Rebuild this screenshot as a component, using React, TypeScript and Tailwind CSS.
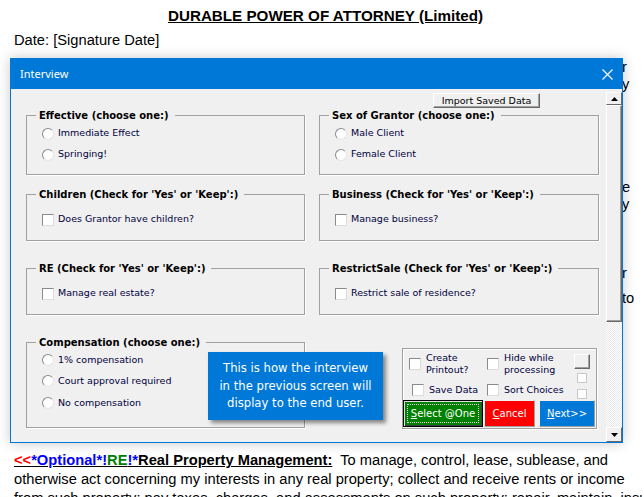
import type { ReactNode } from 'react';

const Radio = () => (
  <span className="w-[12px] h-[12px] shrink-0 rounded-full bg-white border border-t-[#8a8a8a] border-l-[#8a8a8a] border-r-[#e4e4e4] border-b-[#e4e4e4]" />
);

const Check = () => (
  <span className="w-[12px] h-[12px] shrink-0 bg-white border border-t-[#8a8a8a] border-l-[#8a8a8a] border-r-[#dcdcdc] border-b-[#dcdcdc]" />
);

const Opt = ({ radio, label }: { radio?: boolean; label: string }) => (
  <div className="flex items-center gap-[4px] h-[21px] pl-[15px]">
    {radio ? <Radio /> : <Check />}
    <span>{label}</span>
  </div>
);

const Group = ({ title, className, children }: { title: string; className: string; children: ReactNode }) => (
  <fieldset className={`border border-[#a0a0a0] min-w-0 shadow-[1px_1px_0_#fff] ${className}`}>
    <legend className="ml-[9px] pl-[3px] pr-[6px] text-[10px] leading-[13px] font-bold text-black">{title}</legend>
    {children}
  </fieldset>
);

const Arrow = ({ down }: { down?: boolean }) => (
  <svg width="7" height="4" viewBox="0 0 7 4">
    <polygon points={down ? '0,0 7,0 3.5,4' : '0,4 7,4 3.5,0'} fill="#000" />
  </svg>
);

const Interview = () => (
  <div className="absolute left-[10px] top-[58px] w-[613px] h-[385px] border border-[#0078d7] bg-[#f0f0f0] shadow-[0_0_12px_rgba(0,0,0,0.22)] flex flex-col">
    <div className="h-[30px] bg-[#0078d7] flex items-center justify-between pl-[9px] pr-[9px] text-white text-[11px] font-['Noto_Sans',sans-serif]">
      <span>Interview</span>
      <svg width="11" height="11" viewBox="0 0 11 11">
        <path d="M0.5 0.5 L10.5 10.5 M10.5 0.5 L0.5 10.5" stroke="#fff" strokeWidth="1.1" />
      </svg>
    </div>

    <div className="flex-1 flex font-['DejaVu_Sans',sans-serif] text-[9.5px] text-[#00003c]">
      <div className="flex-1 pt-[4px] pl-[15px]">
        <div className="h-[15px] flex">
          <button className="ml-[407px] w-[107px] h-[15px] bg-[#f0f0f0] border border-t-white border-l-white border-r-[#696969] border-b-[#696969] shadow-[inset_-1px_-1px_0_#a0a0a0] text-black text-[9.5px] leading-[12px]">
            Import Saved Data
          </button>
        </div>

        <div className="flex gap-[14px] mt-[1px]">
          <Group title="Effective (choose one:)" className="w-[279px] h-[66px]">
            <div className="pt-[1px]">
              <Opt radio label="Immediate Effect" />
              <Opt radio label="Springing!" />
            </div>
          </Group>
          <Group title="Sex of Grantor (choose one:)" className="w-[280px] h-[66px]">
            <div className="pt-[1px]">
              <Opt radio label="Male Client" />
              <Opt radio label="Female Client" />
            </div>
          </Group>
        </div>

        <div className="flex gap-[14px] mt-[13px]">
          <Group title="Children (Check for 'Yes' or 'Keep':)" className="w-[279px] h-[53px]">
            <div className="pt-[8px]">
              <Opt label="Does Grantor have children?" />
            </div>
          </Group>
          <Group title="Business (Check for 'Yes' or 'Keep':)" className="w-[280px] h-[53px]">
            <div className="pt-[8px]">
              <Opt label="Manage business?" />
            </div>
          </Group>
        </div>

        <div className="flex gap-[14px] mt-[21px]">
          <Group title="RE (Check for 'Yes' or 'Keep':)" className="w-[279px] h-[53px]">
            <div className="pt-[8px]">
              <Opt label="Manage real estate?" />
            </div>
          </Group>
          <Group title="RestrictSale (Check for 'Yes' or 'Keep':)" className="w-[280px] h-[53px]">
            <div className="pt-[8px]">
              <Opt label="Restrict sale of residence?" />
            </div>
          </Group>
        </div>

        <div className="flex gap-[14px] mt-[21px]">
          <Group title="Compensation (choose one:)" className="w-[279px] h-[92px]">
            <div className="[&>div]:h-[21.5px]">
              <Opt radio label="1% compensation" />
              <Opt radio label="Court approval required" />
              <Opt radio label="No compensation" />
            </div>
          </Group>

          <div className="ml-[83px] mt-[11.5px] w-[195px] h-[81px] border border-[#a0a0a0] shadow-[inset_1px_1px_0_#fff,1px_1px_0_#fff] flex flex-col">
            <div className="h-[51px] flex">
              <div className="w-[171px]">
                <div className="flex items-center h-[24px] mt-[3px] pl-[6px]">
                  <div className="w-[78px] flex items-center gap-[5px]">
                    <Check />
                    <span className="leading-[12px]">Create<br />Printout?</span>
                  </div>
                  <div className="flex items-center gap-[5px]">
                    <Check />
                    <span className="leading-[12px]">Hide while<br />processing</span>
                  </div>
                </div>
                <div className="flex items-center h-[19px] mt-[5px] pl-[9px]">
                  <div className="w-[75px] flex items-center gap-[5px]">
                    <Check />
                    <span>Save Data</span>
                  </div>
                  <div className="flex items-center gap-[5px]">
                    <Check />
                    <span>Sort Choices</span>
                  </div>
                </div>
              </div>
              <div className="flex flex-col">
                <div className="mt-[5px] w-[16px] h-[15px] bg-[#f0f0f0] border border-t-white border-l-white border-r-[#696969] border-b-[#696969] shadow-[inset_-1px_-1px_0_#a0a0a0]" />
                <span className="mt-[4px] ml-[3px] w-[10px] h-[10px] bg-white border border-[#c8c8c8]" />
                <span className="mt-[6px] ml-[3px] w-[10px] h-[10px] bg-white border border-[#c8c8c8]" />
              </div>
            </div>
            <div className="flex h-[27px] text-white text-[10px]">
              <div className="w-[80px] h-[27px] border border-black bg-[#008000] shadow-[inset_1px_1px_0_#e0e0e0,inset_-1px_-1px_0_#404040] p-[3px]">
                <div className="h-full border border-dotted border-[#f0d0f0] flex items-center justify-center">
                  <span><span className="underline">S</span>elect @One</span>
                </div>
              </div>
              <div className="ml-[1px] w-[51px] h-[27px] bg-[#ff0000] border border-t-[#f0f0f0] border-l-[#f0f0f0] border-r-[#a0a0a0] border-b-[#a0a0a0] flex items-center justify-center">
                <span><span className="underline">C</span>ancel</span>
              </div>
              <div className="ml-[4px] w-[56px] h-[27px] bg-[#0078d7] border border-t-[#f0f0f0] border-l-[#f0f0f0] border-r-[#a0a0a0] border-b-[#a0a0a0] flex items-center justify-center">
                <span><span className="underline">N</span>ext&gt;&gt;</span>
              </div>
            </div>
          </div>
        </div>
      </div>

      <div className="w-[16px] flex flex-col pt-[3px] bg-[#f0f0f0]">
        <div className="h-[13px] bg-[#f0f0f0] border border-t-white border-l-white border-r-[#696969] border-b-[#696969] flex items-center justify-center">
          <Arrow />
        </div>
        <div className="h-[217px] bg-[#f0f0f0] border border-t-white border-l-white border-r-[#696969] border-b-[#696969] shadow-[inset_-1px_-1px_0_#a0a0a0]" />
        <div className="flex-1 bg-[repeating-conic-gradient(#ffffff_0_25%,#e8e8e8_0_50%)] bg-[length:2px_2px]" />
        <div className="h-[15px] bg-[#f0f0f0] border border-t-white border-l-white border-r-[#696969] border-b-[#696969] flex items-center justify-center">
          <Arrow down />
        </div>
      </div>
    </div>

    <div className="absolute left-[197px] top-[293px] w-[175px] h-[68px] bg-[#0078d7] shadow-[3px_3px_4px_rgba(0,0,0,0.45)] pt-[8px] text-center text-white text-[11.65px] leading-[17.5px] font-['DejaVu_Sans',sans-serif]">
      This is how the interview<br />
      in the previous screen will<br />
      display to the end user.
    </div>
  </div>
);

export default function App() {
  return (
    <div className="relative w-[644px] h-[497px] overflow-hidden bg-white text-black font-['Liberation_Sans',Arial,sans-serif] text-[14.7px]">
      <div className="pt-[6px]">
        <div className="h-[19px] leading-[19px] text-center pl-[7px] text-[15.2px] font-bold">
          <span className="underline">DURABLE POWER OF ATTORNEY (Limited)</span>
        </div>
        <div className="mt-[6px] h-[19px] leading-[19px] pl-[14px]">Date: [Signature Date]</div>

        {/* ends of document lines peeking out from behind the dialog */}
        <div className="mt-[9px] h-[17px] leading-[17px] pl-[622px]">r</div>
        <div className="h-[17px] leading-[17px] pl-[622px]">y</div>
        <div className="mt-[86px] h-[17px] leading-[17px] pl-[622px]">e</div>
        <div className="h-[17px] leading-[17px] pl-[622px]">y</div>
        <div className="mt-[52px] h-[17px] leading-[17px] pl-[622px]">r</div>
        <div className="mt-[8px] h-[17px] leading-[17px] pl-[622px]">to</div>

        <div className="mt-[144px] pl-[14px] leading-[19px] whitespace-nowrap">
          <div>
            <span className="font-bold underline">
              <span className="text-[#ff0000]">&lt;&lt;</span>
              <span className="text-[#0000ff]">*Optional*!</span>
              <span className="text-[#008000]">RE</span>
              <span className="text-[#0000ff]">!*</span>
              <span>Real Property Management:</span>
            </span>
            {'\u00a0 '}To manage, control, lease, sublease, and
          </div>
          <div>otherwise act concerning my interests in any real property; collect and receive rents or income</div>
          <div>from such property; pay taxes, charges, and assessments on such property; repair, maintain, insure</div>
        </div>
      </div>

      <Interview />
    </div>
  );
}
